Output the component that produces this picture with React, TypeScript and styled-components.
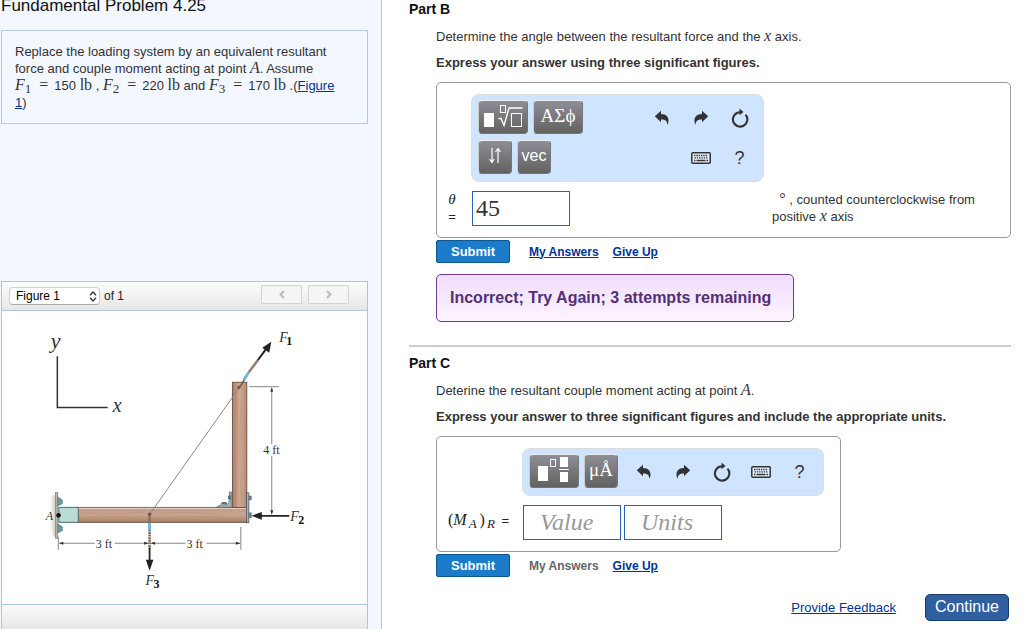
import React from "react";
import styled, { createGlobalStyle } from "styled-components";

const sans = '"Liberation Sans", Arial, sans-serif';
const serif = '"Liberation Serif", "Times New Roman", serif';

const GlobalStyle = createGlobalStyle`
  * { box-sizing: border-box; }
  body { margin: 0; font-family: ${sans}; font-size: 13px; line-height: 16px; color: #333; background: #fff; }
  p, h1, h2 { margin: 0; }
  button, input, select { font-family: inherit; margin: 0; }
  a { color: #039; }
`;

const Page = styled.div`
  display: grid;
  grid-template-columns: minmax(382px, 37%) minmax(0, 1fr);
  height: 100vh;
  overflow: hidden;
`;

const Sidebar = styled.aside`
  display: flex;
  flex-direction: column;
  padding: 0 13px 0 1px;
  background: #f3f7ff;
  border-right: 1px solid #b4c6dc;
  overflow: hidden;
`;

const Title = styled.h1`
  font-size: 17px;
  font-weight: 400;
  line-height: 12px;
  color: #111;
`;

const Prompt = styled.section`
  margin-top: 18px;
  padding: 12px 24px 12px 13px;
  border: 1px solid #b4c9de;
  line-height: 17px;
`;

const Figure = styled.section`
  margin-top: 157px;
  flex: 1;
  display: flex;
  flex-direction: column;
  border: 1px solid #b0c4de;
  border-bottom: 0;
  background: #fff;
`;

const FigureHeader = styled.header`
  display: flex;
  align-items: center;
  gap: 4px;
  height: 29px;
  flex: none;
  padding: 0 18px 0 7px;
  border-bottom: 1px solid #b0c4de;
  background: linear-gradient(#fdfdfd, #e6e6e6);
  font-size: 12px;
  color: #222;
`;

const SelectWrap = styled.span`
  position: relative;
  display: inline-flex;
  svg { position: absolute; right: 3px; top: 4px; pointer-events: none; }
`;

const FigureSelect = styled.select`
  appearance: none;
  width: 91px;
  height: 18px;
  padding: 0 6px;
  border: 1px solid #d0d0d0;
  border-bottom-color: #aaa;
  border-radius: 4px;
  background: #fff;
  font-size: 12px;
  color: #000;
`;

const Pager = styled.nav`
  display: flex;
  gap: 6px;
  margin-left: auto;
  padding-bottom: 3px;
`;

const PagerButton = styled.button`
  display: flex;
  align-items: center;
  justify-content: center;
  width: 41px;
  height: 19px;
  padding: 0;
  border: 1px solid #d3d3d3;
  border-radius: 1px;
  background: #f5f5f5;
`;

const Drawing = styled.svg`
  display: block;
  width: 100%;
  height: 293px;
  flex: none;
`;

const FigureFooter = styled.footer`
  flex: 1;
  border-top: 1px solid #b0c4de;
  background: linear-gradient(#fbfbfb, #e6e6e6);
`;

const Main = styled.main`
  padding: 1px 13px 0 27px;
`;

const Part = styled.section`
  & + & {
    margin-top: 23px;
    padding-top: 8px;
    border-top: 2px solid #ccc;
  }
`;

const PartTitle = styled.h2`
  font-size: 14px;
  line-height: 16px;
  color: #111;
`;

const PartBody = styled.div`
  padding: 12px 0 0 27px;
`;

const Instruction = styled.p`
  margin-top: 10px;
  font-weight: 700;
`;

const AnswerBox = styled.div<{ $label: number; $panel: number; $fit?: boolean }>`
  display: ${(p) => (p.$fit ? "inline-grid" : "grid")};
  grid-template-columns: ${(p) => p.$label}px ${(p) => p.$panel}px minmax(0, 1fr);
  row-gap: 9px;
  margin-top: 11px;
  padding: 11px ${(p) => (p.$fit ? 16 : 8)}px 11px 11px;
  border: 1px solid #999;
  border-radius: 5px;
  vertical-align: top;
`;

const Toolbar = styled.div`
  grid-column: 2;
  display: flex;
  justify-content: space-between;
  padding: 5px 4px 7px 6px;
  background: #cfe5ff;
  border: 1px solid #d9dde2;
  border-radius: 8px;
`;

const ButtonRows = styled.div`
  display: grid;
  gap: 6px;
`;

const ButtonRow = styled.div`
  display: flex;
  gap: 5px;
`;

const MathButton = styled.button<{ $wide?: boolean; $serif?: boolean }>`
  display: flex;
  align-items: center;
  justify-content: center;
  width: ${(p) => (p.$wide ? 50 : 34)}px;
  height: 34px;
  padding: 0 0 3px;
  border: 1px solid #777;
  border-top-color: #eee;
  border-left-color: #ccc;
  border-radius: 4px;
  background: linear-gradient(#8e8e96, #626262);
  color: #fff;
  font-family: ${(p) => (p.$serif ? serif : sans)};
  font-size: ${(p) => (p.$serif ? 19 : 16)}px;
`;

const Tools = styled.div<{ $cols: number }>`
  display: grid;
  grid-template-columns: repeat(${(p) => p.$cols}, 39px);
  grid-auto-rows: 34px;
  row-gap: 6px;
`;

const ToolButton = styled.button<{ $col?: number }>`
  grid-column: ${(p) => p.$col ?? "auto"};
  display: flex;
  align-items: center;
  justify-content: center;
  padding: 2px 0 0;
  border: 0;
  background: none;
  color: #333;
  font-size: 18px;
`;

const MathLabel = styled.label`
  grid-column: 1;
  color: #222;
`;

const ThetaLabel = styled(MathLabel)`
  display: flex;
  flex-direction: column;
  align-items: center;
  width: 8px;
  line-height: 17px;
`;

const Theta = styled.i`
  font-family: ${serif};
  font-size: 15px;
`;

const MomentLabel = styled(MathLabel)`
  align-self: center;
  white-space: nowrap;
  padding-bottom: 4px;
`;

const Fields = styled.div`
  display: flex;
  gap: 3px;
  padding-left: 1px;
`;

const Field = styled.input`
  width: 98px;
  height: 35px;
  padding: 0 3px;
  border: 1px solid #2b5fc0;
  background: #fff;
  color: #333;
  font-family: ${serif};
  font-size: 24px;
  &::placeholder { color: #999; opacity: 1; font-style: italic; text-indent: 13px; }
`;

const Suffix = styled.p`
  grid-column: 3;
  padding-left: 8px;
  line-height: 17px;
`;

const Actions = styled.div`
  display: flex;
  align-items: center;
  gap: 14px;
  margin-top: 2px;
  font-size: 12px;
  font-weight: 700;
`;

const Submit = styled.button`
  width: 74px;
  height: 23px;
  margin-right: 5px;
  padding: 0;
  border: 1px solid #0d5793;
  border-radius: 2px;
  background: #1b7bc8;
  color: #fff;
  font-size: 13px;
  font-weight: 700;
`;

const Muted = styled.span`
  color: #666;
`;

const Feedback = styled.p`
  display: inline-block;
  margin-top: 11px;
  padding: 13px 22px 13px 13px;
  border: 1px solid #6e3a8c;
  border-radius: 5px;
  background: linear-gradient(#f1dcfd, #fdf4ff);
  color: #523075;
  font-size: 16px;
  line-height: 20px;
  font-weight: 700;
  vertical-align: top;
`;

const PageFooter = styled.footer`
  display: flex;
  justify-content: flex-end;
  align-items: center;
  gap: 29px;
  margin-top: 17px;
  padding-right: 2px;
`;

const Continue = styled.button`
  width: 84px;
  height: 27px;
  padding: 0 0 2px;
  border: 1px solid #173c6c;
  border-radius: 5px;
  background: #2f5f9e;
  color: #fff;
  font-size: 16px;
`;

const Var = styled.i`
  font-family: ${serif};
  font-size: 16px;
  line-height: 1px;
`;

const Roman = styled.span`
  font-family: ${serif};
  font-size: 16px;
  line-height: 1px;
`;

const Relation = styled(Roman)`
  margin: 0 6px 0 8px;
`;

const Sub = styled.sub`
  font-family: ${serif};
  font-size: 13px;
  line-height: 1px;
  vertical-align: -3px;
`;

const SubAfter = styled(Sub)`
  margin: 0 3px 0 2px;
`;

const Undo = () => (
  <svg width="16" height="16" viewBox="0 0 16 16" fill="#333" aria-hidden="true">
    <path d="M.8 6.200 7 .8v3.200c5.400 0 8.200 3.200 7.400 8.300-.2 1-.6 1.800-1.200 2.500.2-3.600-1.600-5.300-6.200-5.300v2.700z" />
  </svg>
);
const Redo = () => (
  <svg width="16" height="16" viewBox="0 0 16 16" fill="#333" aria-hidden="true">
    <path d="M15.200 6.200 9 .8v3.200c-5.400 0-8.200 3.200-7.400 8.300.2 1 .6 1.800 1.200 2.500-.2-3.600 1.600-5.300 6.200-5.300v2.700z" />
  </svg>
);
const Reset = () => (
  <svg width="18" height="20" viewBox="0 0 18 20" aria-hidden="true">
    <path d="M9 4.200a7.200 7.200 0 1 0 5.500 2.400" fill="none" stroke="#333" strokeWidth="2.100" />
    <path d="M8.500.5 12.500 4 8.500 7.200z" fill="#333" />
  </svg>
);
const Keyboard = () => (
  <svg width="20" height="12" viewBox="0 0 20 12" aria-hidden="true">
    <rect x=".8" y=".8" width="18.400" height="10.400" rx="1" fill="#e6f1ff" stroke="#333" strokeWidth="1.500" />
    <path d="M3 3.500h14M3.500 5.800h13.500" stroke="#333" strokeWidth="1.300" strokeDasharray="1.400 .9" />
    <path d="M3 8.500h1.500M5.500 8.500h9M15.500 8.500H17" stroke="#333" strokeWidth="1.300" />
  </svg>
);
const RootIcon = () => (
  <svg width="40" height="24" viewBox="0 0 40 24" aria-hidden="true">
    <rect x="1" y="9" width="10" height="14" fill="#fff" />
    <g fill="none" stroke="#fff">
      <rect x="17.500" y="1.500" width="5" height="7" />
      <path d="M15.500 14.500h2.500l3 7 5-17.500h13.500" strokeWidth="1.300" />
      <rect x="28.500" y="9.500" width="10" height="13" />
    </g>
  </svg>
);
const TemplateIcon = () => (
  <svg width="32" height="26" viewBox="0 0 32 26" fill="#fff" aria-hidden="true">
    <rect x="0" y="9" width="10" height="15" />
    <rect x="12.500" y="2.500" width="5" height="7" fill="none" stroke="#fff" />
    <rect x="22" y="0" width="8" height="10" />
    <rect x="21" y="12" width="10" height="1" />
    <rect x="22" y="15" width="8" height="10" />
  </svg>
);
const SwapIcon = () => (
  <svg width="14" height="17" viewBox="0 0 14 17" fill="none" stroke="#fff" strokeWidth="1.200" aria-hidden="true">
    <path d="M4 1v14.500M1.500 12 4 15.500 6 12M10 16V1.500M7.500 5 10 1.500 12.500 5" />
  </svg>
);

const HistoryTools = () => (
  <>
    <ToolButton aria-label="Undo"><Undo /></ToolButton>
    <ToolButton aria-label="Redo"><Redo /></ToolButton>
    <ToolButton aria-label="Reset"><Reset /></ToolButton>
  </>
);

const BeamDrawing = () => (
  <Drawing viewBox="2 311 366 293" role="img" aria-label="Loaded beam">
    <defs>
      <linearGradient id="woodH" x1="0" y1="0" x2="0" y2="1">
        <stop offset="0" stopColor="#c39a83" />
        <stop offset=".5" stopColor="#c9a48f" />
        <stop offset="1" stopColor="#ad7c62" />
      </linearGradient>
      <linearGradient id="woodV" x1="0" y1="0" x2="1" y2="0">
        <stop offset="0" stopColor="#ad7c62" />
        <stop offset=".5" stopColor="#cfa994" />
        <stop offset="1" stopColor="#b98a70" />
      </linearGradient>
      <linearGradient id="wall" x1="0" y1="0" x2="1" y2="0">
        <stop offset="0" stopColor="#f6f5ee" />
        <stop offset="1" stopColor="#cfccbc" />
      </linearGradient>
    </defs>

    <path d="M57.500 356v51.300H108" fill="none" stroke="#333" strokeWidth="1.500" />

    <path d="M56 494q-6 1-5 10v22q0 9 5 12z" fill="url(#wall)" />
    <rect x="55.500" y="492.500" width="2.500" height="46" fill="#b5b5ad" stroke="#666" strokeWidth=".5" />
    <path d="M58 497l4.500 3v4L58 506zM58 524l4.500 3v4L58 533z" fill="#6c9aa3" stroke="#3e5e68" strokeWidth=".5" />

    <rect x="78" y="507.500" width="170" height="15" fill="url(#woodH)" stroke="#5b443a" strokeWidth=".8" />
    <path d="M78 508.500h169" stroke="#ead9ce" />
    <path d="M84 513q34 3 60-1M156 514q30-3 60 0M165 518q35-3 70 1M90 518q25-2 44 0" fill="none" stroke="#b78a74" strokeWidth=".4" />
    <rect x="59" y="507.500" width="19.500" height="15" fill="#b9dcd7" stroke="#4e6b69" />
    <circle cx="58.700" cy="515.500" r="2.300" fill="#111" />

    <rect x="233" y="382" width="14.500" height="125.500" fill="url(#woodV)" stroke="#5b443a" strokeWidth=".8" />
    <path d="M237 388q2 45-1 113M242 398q-3 50 0 104" fill="none" stroke="#b78a74" strokeWidth=".4" />
    <rect x="247" y="493" width="2.600" height="30" fill="#9fb8b8" stroke="#334" strokeWidth=".6" />
    <path d="M250 496h2v4h-2zM250 513h2v5h-2z" fill="#5f8790" stroke="#344" strokeWidth=".4" />
    <path d="M232 492v15.500h-15l4-2.500h6q3-1 3-5v-8z" fill="#9fb8b8" stroke="#3f5558" strokeWidth=".6" />
    <path d="M228.500 496l3-1v5l-3-1zM221 504l2-2h4l1 3z" fill="#4f7a85" />

    <path d="M150 514.500 241 386" stroke="#888" strokeWidth="1" />
    <path d="M239 389l7-11" stroke="#6b5548" strokeWidth="1.500" />
    <path d="M244.500 379.500l5-7.500" stroke="#6fb7dc" strokeWidth="3" />
    <path d="M249.500 372l9-12" stroke="#9a7c6c" strokeWidth="2.500" />
    <path d="M258.500 360l8-11" stroke="#222" strokeWidth="2" />
    <path d="M272 341.500l-2 11-7-5z" fill="#222" />
    <circle cx="239.500" cy="387" r="1.500" fill="#6b5548" />

    <path d="M150 514v35" stroke="#806457" strokeWidth="2.500" strokeDasharray="2 .6" />
    <path d="M150 523.500v7" stroke="#6fb7dc" strokeWidth="3" />
    <path d="M150 548v14" stroke="#222" strokeWidth="1.800" />
    <path d="M150 571l-3.800-11h7.600z" fill="#222" />
    <circle cx="150" cy="514.500" r="1.800" fill="#6b5548" />

    <path d="M290 516h-32" stroke="#222" strokeWidth="1.800" />
    <path d="M252 516l10.500-3.800v7.600z" fill="#222" />

    <g stroke="#777" strokeWidth=".9" fill="none">
      <path d="M250 386.500h29.500M272.500 388v56M272.500 456v58" />
      <path d="M58.500 537v13M241.500 527v23" />
      <path d="M60 543.500h35M115 543.500h34M152 543.500h34M207 543.500h34" />
    </g>
    <path d="M272.500 387l-1.500 4.500h3zM272.500 515l-1.500-4.500h3zM59 543.500l4.500-1.500v3zM149 543.500l-4.500-1.500v3zM151 543.500l4.500-1.500v3zM241 543.500l-4.500-1.500v3z" fill="#333" />

    <g fontFamily={serif} fill="#333" fontSize="12">
      <text x="264" y="454">4 ft</text>
      <text x="96" y="548">3 ft</text>
      <text x="187" y="548">3 ft</text>
      <g fontStyle="italic">
        <text x="51" y="348" fontSize="22">y</text>
        <text x="113" y="412" fontSize="20">x</text>
        <text x="46" y="520" fontSize="12">A</text>
        <text x="280" y="342" fontSize="14">F</text>
        <text x="291" y="521" fontSize="14">F</text>
        <text x="146" y="585" fontSize="14">F</text>
      </g>
      <g fontSize="12" fontWeight="700" fill="#111">
        <text x="287" y="345">1</text>
        <text x="299" y="524">2</text>
        <text x="154" y="588">3</text>
      </g>
    </g>
  </Drawing>
);

export default function App() {
  return (
    <>
      <GlobalStyle />
      <Page>
        <Sidebar>
          <Title>Fundamental Problem 4.25</Title>
          <Prompt>
            Replace the loading system by an equivalent resultant force and couple moment acting at point <Var>A</Var>. Assume{" "}
            <Var>F</Var><Sub>1</Sub><Relation>=</Relation>150 <Roman>lb</Roman> , <Var>F</Var><Sub>2</Sub>
            <Relation>=</Relation>220 <Roman>lb</Roman> and <Var>F</Var><Sub>3</Sub><Relation>=</Relation>170 <Roman>lb</Roman> .(<a href="#figure">Figure 1</a>)
          </Prompt>
          <Figure id="figure">
            <FigureHeader>
              <SelectWrap>
                <FigureSelect id="figure-select" aria-label="Figure">
                  <option>Figure 1</option>
                </FigureSelect>
                <svg width="8" height="11" viewBox="0 0 8 11" fill="none" stroke="#333" strokeWidth="1.300" aria-hidden="true">
                  <path d="M1 4.200 4 1l3 3.200M1 6.800 4 10l3-3.200" />
                </svg>
              </SelectWrap>
              <span>of 1</span>
              <Pager>
                <PagerButton aria-label="Previous figure" disabled>
                  <svg width="6" height="9" viewBox="0 0 6 9" fill="none" stroke="#bbb" strokeWidth="2"><path d="M5 1 1.500 4.500 5 8" /></svg>
                </PagerButton>
                <PagerButton aria-label="Next figure" disabled>
                  <svg width="6" height="9" viewBox="0 0 6 9" fill="none" stroke="#bbb" strokeWidth="2"><path d="M1 1l3.500 3.500L1 8" /></svg>
                </PagerButton>
              </Pager>
            </FigureHeader>
            <BeamDrawing />
            <FigureFooter />
          </Figure>
        </Sidebar>

        <Main>
          <Part>
            <PartTitle>Part B</PartTitle>
            <PartBody>
              <p>Determine the angle between the resultant force and the <Var>x</Var> axis.</p>
              <Instruction>Express your answer using three significant figures.</Instruction>
              <AnswerBox $label={23} $panel={293}>
                <Toolbar>
                  <ButtonRows>
                    <ButtonRow>
                      <MathButton $wide aria-label="Templates"><RootIcon /></MathButton>
                      <MathButton $wide $serif>ΑΣϕ</MathButton>
                    </ButtonRow>
                    <ButtonRow>
                      <MathButton aria-label="Arrows"><SwapIcon /></MathButton>
                      <MathButton>vec</MathButton>
                    </ButtonRow>
                  </ButtonRows>
                  <Tools $cols={3}>
                    <HistoryTools />
                    <ToolButton $col={2} aria-label="Keyboard shortcuts"><Keyboard /></ToolButton>
                    <ToolButton $col={3}>?</ToolButton>
                  </Tools>
                </Toolbar>
                <ThetaLabel htmlFor="theta"><Theta>θ</Theta><span>=</span></ThetaLabel>
                <Fields><Field id="theta" defaultValue="45" /></Fields>
                <Suffix>&nbsp; <Roman>°</Roman> , counted counterclockwise from positive <Var>x</Var> axis</Suffix>
              </AnswerBox>
              <Actions>
                <Submit>Submit</Submit>
                <a href="#answers">My Answers</a>
                <a href="#give-up">Give Up</a>
              </Actions>
              <Feedback>Incorrect; Try Again; 3 attempts remaining</Feedback>
            </PartBody>
          </Part>

          <Part>
            <PartTitle>Part C</PartTitle>
            <PartBody>
              <p>Deterine the resultant couple moment acting at point <Var>A</Var>.</p>
              <Instruction>Express your answer to three significant figures and include the appropriate units.</Instruction>
              <AnswerBox $label={74} $panel={302} $fit>
                <Toolbar>
                  <ButtonRow>
                    <MathButton $wide aria-label="Templates"><TemplateIcon /></MathButton>
                    <MathButton $serif>μÅ</MathButton>
                  </ButtonRow>
                  <Tools $cols={5}>
                    <HistoryTools />
                    <ToolButton aria-label="Keyboard shortcuts"><Keyboard /></ToolButton>
                    <ToolButton>?</ToolButton>
                  </Tools>
                </Toolbar>
                <MomentLabel htmlFor="value">
                  <Roman>(</Roman><Var>M</Var><SubAfter><i>A</i></SubAfter><Roman>)</Roman><SubAfter><i>R</i></SubAfter> =
                </MomentLabel>
                <Fields>
                  <Field id="value" placeholder="Value" />
                  <Field aria-label="Units" placeholder="Units" />
                </Fields>
              </AnswerBox>
              <Actions>
                <Submit>Submit</Submit>
                <Muted>My Answers</Muted>
                <a href="#give-up-c">Give Up</a>
              </Actions>
            </PartBody>
          </Part>

          <PageFooter>
            <a href="#feedback">Provide Feedback</a>
            <Continue>Continue</Continue>
          </PageFooter>
        </Main>
      </Page>
    </>
  );
}
